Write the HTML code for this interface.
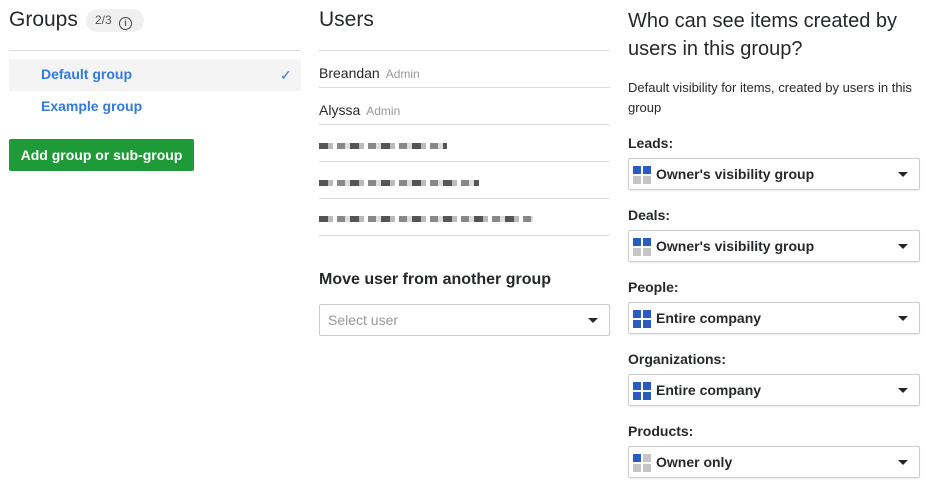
<!DOCTYPE html>
<html><head><meta charset="utf-8"><style>
*{box-sizing:border-box;margin:0;padding:0}
body{width:933px;height:492px;background:#fff;font-family:"Liberation Sans",sans-serif;color:#26292c;position:relative;overflow:hidden}
.a{position:absolute}
h1{font-weight:400;font-size:21px;position:absolute}
.line{position:absolute;height:1px;background:#dcdcdc}
.blue{color:#317ae2;font-weight:700;font-size:14px}
.sel{position:absolute;left:628px;width:292px;height:32px;border:1px solid #ccc;border-radius:2px;box-shadow:0 1px 1px rgba(0,0,0,.08);font-size:14px;font-weight:700}
.sel .t{position:absolute;left:27px;top:7px}
.caret{position:absolute;right:11px;top:13px;width:0;height:0;border-left:5px solid transparent;border-right:5px solid transparent;border-top:5px solid #26292c}
.ic{position:absolute;left:4px;top:7px;width:18px;height:18px}
.ic i{position:absolute;width:8px;height:8px;background:#c5c5c5}
.ic i.b{background:#2a5bbf}
.lab{position:absolute;left:628px;font-size:14px;font-weight:700}
.urow{position:absolute;left:319px;font-size:14px}
.urow span{color:#999;font-size:12px;margin-left:6px}
.px{position:absolute;height:6px;background:repeating-linear-gradient(90deg,#555 0 9px,#bbb 9px 14px,#fff 14px 18px,#888 18px 26px,#ddd 26px 31px)}
</style></head><body>
<h1 style="left:9px;top:8px">Groups</h1>
<div class="a" style="left:86px;top:9px;width:58px;height:23px;background:#f0f0f0;border-radius:12px;font-size:12px;color:#555;padding:4px 0 0 9px">2/3 <span style="display:inline-block;width:13px;height:13px;border:1.5px solid #444;border-radius:50%;font-size:9px;font-weight:700;text-align:center;line-height:10px;margin-left:4px;vertical-align:-2px">i</span></div>
<div class="line" style="left:9px;top:50px;width:292px"></div>
<div class="a" style="left:9px;top:59px;width:292px;height:32px;background:#f4f4f5"></div>
<div class="a blue" style="left:41px;top:66px">Default group</div>
<div class="a" style="left:280px;top:67px;color:#317ae2;font-size:14px">✓</div>
<div class="a blue" style="left:41px;top:98px">Example group</div>
<div class="a" style="left:9px;top:139px;width:185px;height:32px;background:#1f9a38;border-radius:2px;color:#fff;font-weight:700;font-size:14px;text-align:center;line-height:32px">Add group or sub-group</div>

<h1 style="left:319px;top:8px">Users</h1>
<div class="line" style="left:319px;top:50px;width:291px"></div>
<div class="urow" style="top:65px">Breandan<span>Admin</span></div>
<div class="line" style="left:319px;top:87px;width:291px"></div>
<div class="urow" style="top:102px">Alyssa<span>Admin</span></div>
<div class="line" style="left:319px;top:124px;width:291px"></div>
<div class="px" style="left:319px;top:143px;width:128px"></div>
<div class="line" style="left:319px;top:161px;width:291px"></div>
<div class="px" style="left:319px;top:180px;width:160px"></div>
<div class="line" style="left:319px;top:198px;width:291px"></div>
<div class="px" style="left:319px;top:216px;width:214px"></div>
<div class="line" style="left:319px;top:235px;width:291px"></div>
<div class="a" style="left:319px;top:271px;font-size:16px;font-weight:700">Move user from another group</div>
<div class="a" style="left:319px;top:304px;width:291px;height:32px;border:1px solid #ccc;border-radius:2px;font-size:14px;color:#999;padding:7px 0 0 8px">Select user<div class="caret"></div></div>

<div class="a" style="left:628px;top:7px;font-size:20px;line-height:28px;width:300px">Who can see items created by users in this group?</div>
<div class="a" style="left:628px;top:78px;font-size:13px;line-height:20px;width:295px">Default visibility for items, created by users in this group</div>

<div class="lab" style="top:135px">Leads:</div>
<div class="sel" style="top:158px"><div class="ic"><i class="b" style="left:0;top:0"></i><i class="b" style="left:10px;top:0"></i><i style="left:0;top:10px"></i><i style="left:10px;top:10px"></i></div><div class="t">Owner's visibility group</div><div class="caret"></div></div>
<div class="lab" style="top:207px">Deals:</div>
<div class="sel" style="top:230px"><div class="ic"><i class="b" style="left:0;top:0"></i><i class="b" style="left:10px;top:0"></i><i style="left:0;top:10px"></i><i style="left:10px;top:10px"></i></div><div class="t">Owner's visibility group</div><div class="caret"></div></div>
<div class="lab" style="top:279px">People:</div>
<div class="sel" style="top:302px"><div class="ic"><i class="b" style="left:0;top:0"></i><i class="b" style="left:10px;top:0"></i><i class="b" style="left:0;top:10px"></i><i class="b" style="left:10px;top:10px"></i></div><div class="t">Entire company</div><div class="caret"></div></div>
<div class="lab" style="top:351px">Organizations:</div>
<div class="sel" style="top:374px"><div class="ic"><i class="b" style="left:0;top:0"></i><i class="b" style="left:10px;top:0"></i><i class="b" style="left:0;top:10px"></i><i class="b" style="left:10px;top:10px"></i></div><div class="t">Entire company</div><div class="caret"></div></div>
<div class="lab" style="top:423px">Products:</div>
<div class="sel" style="top:446px"><div class="ic"><i class="b" style="left:0;top:0"></i><i style="left:10px;top:0"></i><i style="left:0;top:10px"></i><i style="left:10px;top:10px"></i></div><div class="t">Owner only</div><div class="caret"></div></div>
</body></html>
